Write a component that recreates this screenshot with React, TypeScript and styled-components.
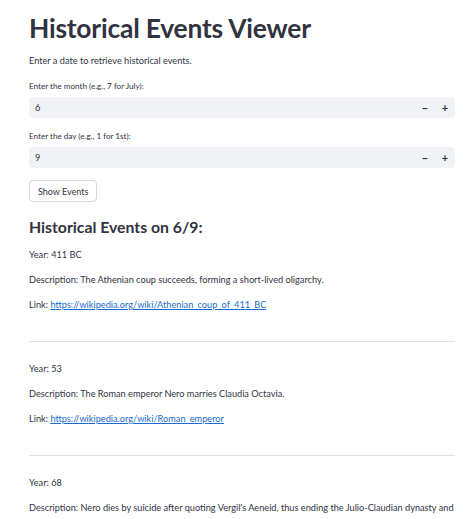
import styled, { createGlobalStyle } from "styled-components"

const GlobalStyle = createGlobalStyle`
  html, body { margin: 0; padding: 0; background: #fff; }
  body {
    font-family: Lato, "Liberation Sans", sans-serif;
    color: #31333f;
    -webkit-font-smoothing: antialiased;
  }
  * { box-sizing: border-box; }
`

const Main = styled.main`
  width: 474px; height: 519px; overflow: hidden;
  padding: 12px 19px 0 29px;
  display: flex; flex-direction: column;
  & > * { flex-shrink: 0; }
`

const Title = styled.h1`
  font-size: 26.4px; font-weight: 700; margin: 0; line-height: 32px;
  letter-spacing: -0.2px;
`

const Text = styled.p`
  font-size: 9.2px; margin: 0; line-height: 15px;
`

const Intro = styled(Text)`
  margin-top: 9px;
`

const Field = styled.div`
  display: flex; flex-direction: column; gap: 5px;
  margin-top: 12px;
`

const Label = styled.label`
  font-size: 8.1px; line-height: 12px;
`

const NumberBox = styled.div`
  height: 21px; border-radius: 4px; background: #f0f2f6;
  display: flex; align-items: center; padding: 0 0 0 6px;
  font-size: 9.2px;
`

const Value = styled.span`
  flex: 1;
`

const Step = styled.button`
  width: 20px; height: 21px; border: 0; background: transparent; padding: 0;
  color: #31333f; font-size: 11px; font-weight: 700; font-family: inherit;
  display: flex; align-items: center; justify-content: center;
`

const ShowButton = styled.button`
  align-self: flex-start; margin-top: 12px;
  height: 22px; padding: 0 8px; border-radius: 4px;
  border: 1px solid #d9dadd; background: #fff; color: #31333f;
  font-family: inherit; font-size: 9px;
`

const Heading = styled.h2`
  font-size: 15.8px; font-weight: 700; margin: 14px 0 0; line-height: 22px;
`

const Event = styled.section`
  display: flex; flex-direction: column; gap: 10px;
  margin-top: ${(p: { $first?: boolean }) => (p.$first ? 9 : 19)}px;
`

const Rule = styled.hr`
  border: 0; border-top: 1px solid #e1e2e5; margin: 29px 0 0; width: 100%;
`

const Link = styled.a`
  color: #1a6dd0; text-decoration: underline;
`

const events = [
  {
    year: "411 BC",
    desc: "The Athenian coup succeeds, forming a short-lived oligarchy.",
    link: "https://wikipedia.org/wiki/Athenian_coup_of_411_BC",
  },
  {
    year: "53",
    desc: "The Roman emperor Nero marries Claudia Octavia.",
    link: "https://wikipedia.org/wiki/Roman_emperor",
  },
  {
    year: "68",
    desc: "Nero dies by suicide after quoting Vergil's Aeneid, thus ending the Julio-Claudian dynasty and starting the civil war known as the Year of the Four Emperors.",
    link: "https://wikipedia.org/wiki/Nero",
  },
]

const NumberInput = ({ label, value }: { label: string; value: number }) => (
  <Field>
    <Label>{label}</Label>
    <NumberBox>
      <Value>{value}</Value>
      <Step>−</Step>
      <Step>+</Step>
    </NumberBox>
  </Field>
)

const App = () => {
  return (
    <Main>
      <GlobalStyle />
      <Title>Historical Events Viewer</Title>
      <Intro>Enter a date to retrieve historical events.</Intro>

      <NumberInput label="Enter the month (e.g., 7 for July):" value={6} />
      <NumberInput label="Enter the day (e.g., 1 for 1st):" value={9} />

      <ShowButton>Show Events</ShowButton>

      <Heading>Historical Events on 6/9:</Heading>

      {events.map((e, i) => (
        <div key={e.year}>
          {i > 0 && <Rule />}
          <Event $first={i === 0}>
            <Text>Year: {e.year}</Text>
            <Text>Description: {e.desc}</Text>
            <Text>
              Link: <Link href={e.link}>{e.link}</Link>
            </Text>
          </Event>
        </div>
      ))}
    </Main>
  )
}

export default App
